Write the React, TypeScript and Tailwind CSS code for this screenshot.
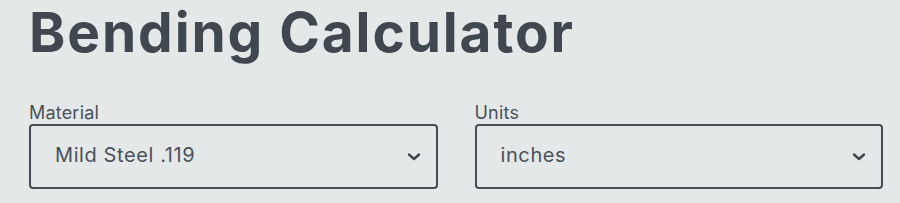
const font = { fontFamily: 'Inter, "Open Sans", sans-serif' };

function Chevron() {
  return (
    <svg width="14" height="8" viewBox="0 0 14 8" className="text-[#3f464d]">
      <polyline points="2,1.5 7,6 12,1.5" fill="none" stroke="currentColor" strokeWidth="2.4" strokeLinecap="round" strokeLinejoin="round" />
    </svg>
  );
}

function SelectField({ label, value }: { label: string; value: string }) {
  return (
    <div className="flex flex-col">
      <label className="text-[18px] leading-[22px] tracking-[0.2px] text-[#4a5158]">{label}</label>
      <div className="flex h-[65px] items-center justify-between rounded-[4px] border-2 border-[#464d54] pl-[24px] pr-[15px]">
        <span className="pb-[3px] text-[20px] tracking-[0.6px] text-[#4a5158]">{value}</span>
        <Chevron />
      </div>
    </div>
  );
}

export default function App() {
  return (
    <div className="min-h-[203px] bg-[#e5e8e8] pl-[29px] pr-[17px]" style={font}>
      <h1 className="pt-[1px] text-[55px] font-bold leading-[62px] tracking-[1.9px] text-[#40474f]">
        Bending Calculator
      </h1>
      <div className="mt-[39px] grid grid-cols-2 gap-[37px]">
        <SelectField label="Material" value="Mild Steel .119" />
        <SelectField label="Units" value="inches" />
      </div>
    </div>
  );
}
